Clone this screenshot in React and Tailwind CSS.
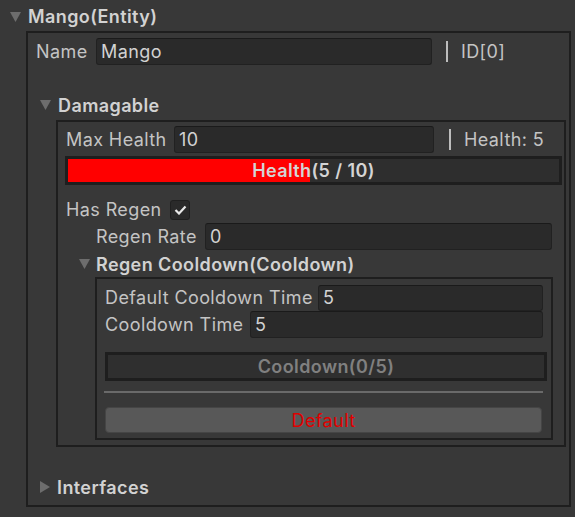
import React from "react";

const Down = ({ className = "" }) => (
  <svg width="11" height="10" viewBox="0 0 11 10" className={className}>
    <path d="M0 0 H11 L5.5 10 Z" fill="#6d6d6d" />
  </svg>
);

const Right = ({ className = "" }) => (
  <svg width="10" height="12" viewBox="0 0 10 12" className={className}>
    <path d="M0 0 L10 6 L0 12 Z" fill="#6d6d6d" />
  </svg>
);

const Field = ({ value, className = "" }) => (
  <div
    className={
      "flex items-center pl-[4px] pt-[1px] rounded-[3px] bg-[#2a2a2a] border border-[#212121] border-t-[#1a1a1a] text-[#d2d2d2] leading-[24px] " +
      className
    }
  >
    {value}
  </div>
);

const Label = ({ children, className = "" }) => (
  <span className={"leading-[26px] pt-[1px] whitespace-nowrap " + className}>{children}</span>
);

const Bar = () => <div className="w-[2px] h-[21px] bg-[#bdbdbd]" />;

const App = () => {
  return (
    <div
      className="w-[575px] h-[517px] bg-[#383838] text-[#c4c4c4] text-[18px] tracking-[0.4px] overflow-hidden"
      style={{ fontFamily: "Inter, 'Noto Sans', sans-serif" }}
    >
      {/* entity header */}
      <div className="h-[31px] flex items-center pl-[10px] pt-[2px]">
        <Down />
        <span className="ml-[7px] font-semibold text-[#d2d2d2]">Mango(Entity)</span>
      </div>

      <div className="ml-[26px] w-[545px] h-[476px] border-2 border-[#1e1e1e] flex flex-col">
        {/* name row */}
        <div className="flex items-center mt-[5px] h-[27px] pl-[8px]">
          <Label className="w-[60px]">Name</Label>
          <Field value="Mango" className="w-[336px] h-[27px]" />
          <div className="ml-[14px]"><Bar /></div>
          <Label className="ml-[13px]">ID[0]</Label>
        </div>

        {/* damagable header */}
        <div className="flex items-center mt-[28px] h-[24px] pl-[12px]">
          <Down />
          <span className="ml-[7px] font-semibold text-[#d2d2d2]">Damagable</span>
        </div>

        <div className="ml-[28px] mt-[3px] w-[510px] h-[327px] border-2 border-[#1e1e1e] flex flex-col">
          {/* max health */}
          <div className="flex items-center mt-[4px] h-[27px] pl-[8px]">
            <Label className="w-[108px]">Max Health</Label>
            <Field value="10" className="w-[260px] h-[27px]" />
            <div className="ml-[15px]"><Bar /></div>
            <Label className="ml-[13px]">Health: 5</Label>
          </div>

          {/* health bar */}
          <div className="ml-[7px] mt-[3px] w-[497px] h-[29px] border-[3px] border-[#1e1e1e] bg-[#2e2e2e] relative flex items-center justify-center">
            <div className="absolute left-0 top-0 bottom-0 w-[242px] bg-[#ff0000]" />
            <span className="relative font-semibold text-[#d4d4d4]">Health(5 / 10)</span>
          </div>

          {/* has regen */}
          <div className="flex items-center mt-[11px] h-[27px] pl-[8px]">
            <Label className="w-[104px]">Has Regen</Label>
            <div className="w-[20px] h-[20px] rounded-[3px] bg-[#2a2a2a] border border-[#202020] flex items-center justify-center">
              <svg width="13" height="10" viewBox="0 0 13 10">
                <path d="M1.5 5 L5 8.5 L11.5 1.5" fill="none" stroke="#e8e8e8" strokeWidth="2.2" />
              </svg>
            </div>
          </div>

          {/* regen rate */}
          <div className="flex items-center h-[27px] pl-[38px]">
            <Label className="w-[109px]">Regen Rate</Label>
            <Field value="0" className="w-[347px] h-[27px]" />
          </div>

          {/* regen cooldown header */}
          <div className="flex items-center mt-[1px] h-[26px] pl-[21px]">
            <Down />
            <span className="ml-[6px] font-semibold text-[#d2d2d2]">Regen Cooldown(Cooldown)</span>
          </div>

          <div className="ml-[37px] w-[458px] h-[163px] border-2 border-[#1e1e1e] flex flex-col">
            <div className="flex items-center mt-[5px] h-[27px] pl-[8px]">
              <Label className="w-[213px]">Default Cooldown Time</Label>
              <Field value="5" className="w-[225px] h-[26px]" />
            </div>
            <div className="flex items-center h-[27px] pl-[8px]">
              <Label className="w-[145px]">Cooldown Time</Label>
              <Field value="5" className="w-[293px] h-[27px]" />
            </div>

            {/* cooldown progress */}
            <div className="ml-[8px] mt-[14px] w-[442px] h-[29px] border-[3px] border-[#1e1e1e] bg-[#2f2f2f] flex items-center justify-center">
              <span className="font-semibold text-[#808080]">Cooldown(0/5)</span>
            </div>

            <div className="ml-[7px] mt-[10px] w-[439px] h-[2px] bg-[#6a6a6a]" />

            <div className="ml-[8px] mt-[14px] w-[437px] h-[26px] rounded-[4px] bg-[#585858] border border-[#454545] flex items-center justify-center text-[#e00000]">
              Default
            </div>
          </div>
        </div>

        {/* interfaces header */}
        <div className="flex items-center mt-[28px] h-[24px] pl-[12px]">
          <Right />
          <span className="ml-[7px] font-semibold text-[#d2d2d2]">Interfaces</span>
        </div>
      </div>
    </div>
  );
};

export default App;
